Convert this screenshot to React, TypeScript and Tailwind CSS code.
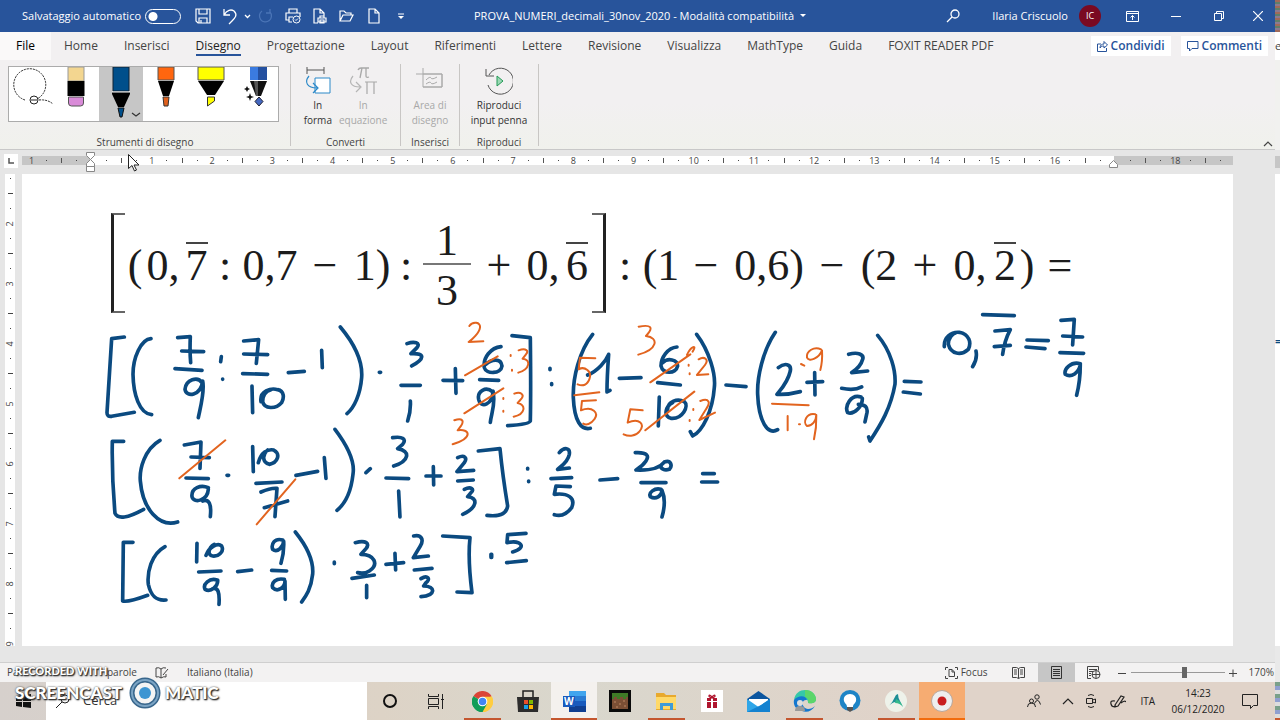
import React from "react";

type Kids = { children: React.ReactNode };

function Svg({ w, h, box, children }: { w: number; h: number; box?: string } & Kids) {
  return (
    <svg width={w} height={h} viewBox={box ?? `0 0 ${w} ${h}`} fill="none" aria-hidden="true" className="shrink-0">
      {children}
    </svg>
  );
}

function QuickButton({ label, children }: { label: string } & Kids) {
  return (
    <button aria-label={label} className="flex h-8 w-[27px] items-center justify-center">
      {children}
    </button>
  );
}

function TitleBar() {
  return (
    <header className="flex h-8 items-center justify-between bg-[#28549b] text-xs text-white">
      <div className="flex items-center">
        <label htmlFor="autosave" className="w-[123px] pl-[22px] text-[11px] whitespace-nowrap">
          Salvataggio automatico
        </label>
        <input
          id="autosave"
          type="checkbox"
          role="switch"
          className="ml-[22px] h-[15px] w-9 appearance-none rounded-full border border-white bg-[radial-gradient(circle_at_7px_50%,#fff_4px,transparent_5px)]"
        />
        <div className="ml-2 flex items-center">
          <QuickButton label="Salva">
            <Svg w={16} h={16}>
              <path d="M1 1h14v14H3L1 13zM4 1v5h8V1M4 15v-5h8v5M6 12v3" stroke="#fff" strokeWidth="1.2" />
            </Svg>
          </QuickButton>
          <QuickButton label="Annulla">
            <Svg w={16} h={17}>
              <path d="M2 1v6h6M2 7C5 2 9 1 12 3c4 4 1 7-2 10l-3 3" stroke="#fff" strokeWidth="1.3" />
            </Svg>
          </QuickButton>
          <button aria-label="Opzioni annulla" className="flex w-[9px] justify-center">
            <Svg w={7} h={5}>
              <path d="M1 1l2.500 2.500L6 1" stroke="#fff" strokeWidth="1.3" />
            </Svg>
          </button>
          <QuickButton label="Ripeti">
            <Svg w={16} h={16}>
              <path d="M12 1v4H8M12 4a6 6 0 1 1-8-1" stroke="#4a74b6" strokeWidth="1.3" />
            </Svg>
          </QuickButton>
          <QuickButton label="Stampa rapida">
            <Svg w={16} h={16}>
              <path d="M4 5V1h8v4M4 12H1V5h14v4M4 12V9h4M4 9v5h3" stroke="#fff" strokeWidth="1.2" />
              <circle cx="11.500" cy="11.500" r="3.500" stroke="#fff" />
              <path d="M10 11.500l1 1 2-2" stroke="#fff" />
            </Svg>
          </QuickButton>
          <QuickButton label="Anteprima di stampa">
            <Svg w={14} h={16}>
              <path d="M5 15H1V1h6l4 4v3M7 1v4h4M7 10V8h4v2M5 10h8v4H5zM7 12h4v3H7z" stroke="#fff" strokeWidth="1.2" />
            </Svg>
          </QuickButton>
          <QuickButton label="Apri">
            <Svg w={15} h={12}>
              <path d="M1 11V1h4l2 2h5v2M1 11l3-6h10l-3 6z" stroke="#fff" strokeWidth="1.2" />
            </Svg>
          </QuickButton>
          <QuickButton label="Nuovo">
            <Svg w={12} h={16}>
              <path d="M1 1h6l4 4v10H1zM7 1v4h4" stroke="#fff" strokeWidth="1.200" />
            </Svg>
          </QuickButton>
          <QuickButton label="Personalizza barra di accesso rapido">
            <Svg w={8} h={7}>
              <path d="M1 1h6" stroke="#fff" />
              <path d="M1 3h6L4 6z" fill="#fff" />
            </Svg>
          </QuickButton>
        </div>
      </div>
      <button className="ml-[60px] flex flex-1 items-center gap-1 text-[11px] whitespace-pre">
        PROVA_NUMERI_decimali_30nov_2020 - Modalità compatibilità
        <Svg w={8} h={4}>
          <path d="M2 0h6L5 3z" fill="#fff" />
        </Svg>
      </button>
      <div className="flex items-center">
        <button aria-label="Cerca" className="mr-8">
          <Svg w={14} h={14}>
            <circle cx="9" cy="5" r="4" stroke="#fff" strokeWidth="1.3" />
            <path d="M6 8L1 13" stroke="#fff" strokeWidth="1.3" />
          </Svg>
        </button>
        <button className="flex items-center gap-[11px] text-[11px]">
          Ilaria Criscuolo
          <span className="flex size-[22px] items-center justify-center rounded-full bg-[#7a0a22] text-[9px]">IC</span>
        </button>
        <button aria-label="Opzioni barra multifunzione" className="ml-[10px] flex w-[43px] justify-center">
          <Svg w={13} h={11}>
            <path d="M.5.500h12v10H.5zM.5 2.500h12M6.500 9V4.500M4.500 6.500l2-2 2 2" stroke="#fff" />
          </Svg>
        </button>
        <button aria-label="Riduci a icona" className="flex w-[43px] justify-center">
          <Svg w={10} h={10}>
            <path d="M0 5.500h10" stroke="#fff" />
          </Svg>
        </button>
        <button aria-label="Ripristina" className="flex w-[43px] justify-center">
          <Svg w={10} h={10}>
            <path d="M.5 2.500h7v7h-7zM2.500 2V.500h7v7H8" stroke="#fff" />
          </Svg>
        </button>
        <button aria-label="Chiudi" className="mr-[-1px] flex w-9 justify-center">
          <Svg w={10} h={10}>
            <path d="M0 0l10 10M10 0L0 10" stroke="#fff" strokeWidth="1.2" />
          </Svg>
        </button>
      </div>
    </header>
  );
}

const tabs = ["Home", "Inserisci", "Disegno", "Progettazione", "Layout", "Riferimenti", "Lettere", "Revisione", "Visualizza", "MathType", "Guida", "FOXIT READER PDF"];

function TabRow() {
  return (
    <nav className="flex h-7 items-center justify-between text-xs text-[#444]">
      <div className="flex h-7 items-center">
        <button className="h-7 w-[51px] bg-[#faf9f9] text-black">File</button>
        {tabs.map((t) => (
          <button key={t} className="flex h-7 items-center px-[13px] text-xs whitespace-nowrap">
            {t === "Disegno" ? (
              <span className="border-y-2 border-t-transparent border-b-[#28549b] font-medium text-[#222]">{t}</span>
            ) : (
              t
            )}
          </button>
        ))}
      </div>
      <div className="mr-[7px] flex gap-[10px] font-semibold text-[#28549b]">
        <button className="flex h-5 items-center gap-[3px] bg-white px-[6px] text-xs">
          <Svg w={11} h={12}>
            <path d="M4 4H.5v7.500h9V8M3 8c0-3 2-4 4-4V1.500L10.500 5 7 8V6C5 6 4 6.500 3 8z" stroke="#28549b" />
          </Svg>
          Condividi
        </button>
        <button className="flex h-5 items-center gap-[3px] bg-white px-[6px] text-xs">
          <Svg w={12} h={11}>
            <path d="M.5.500h10.500v7H5l-2.500 2.500V7.500h-2z" stroke="#28549b" />
          </Svg>
          Commenti
        </button>
      </div>
    </nav>
  );
}

function ToolCell({ label, selected, children }: { label: string; selected?: boolean } & Kids) {
  return (
    <button aria-label={label} className={selected ? "flex flex-1 justify-center bg-[#c6c6c6]" : "flex flex-1 justify-center"}>
      {children}
    </button>
  );
}

function PenGallery() {
  return (
    <div className="mr-[11px] ml-2 flex h-14 w-[271px] border border-[#ababab] bg-white">
      <ToolCell label="Selezione lazo">
        <Svg w={44} h={54}>
          <path d="M16 33a16 16 0 1 1 12-1M30 33q10-1 16 6" stroke="#222" strokeDasharray="2 1" />
          <circle cx="25" cy="33" r="4" stroke="#222" />
          <path d="M22 33h6" stroke="#222" />
        </Svg>
      </ToolCell>
      <ToolCell label="Gomma">
        <Svg w={18} h={42}>
          <path d="M1 0h16v14H1z" fill="#f3d690" stroke="#999" />
          <path d="M.5 14h17v15H.5z" fill="#000" />
          <path d="M1.500 30h15v6q0 3-3 3h-9q-3 0-3-3z" fill="#d98bd8" stroke="#555" />
        </Svg>
      </ToolCell>
      <ToolCell label="Penna blu" selected>
        <Svg w={44} h={54}>
          <path d="M14 0h16v24H14z" fill="#004f8b" stroke="#123" />
          <path d="M13 25h18v2l-6 13h-6L13 27z" fill="#000" />
          <path d="M13 25h18" stroke="#fff" />
          <path d="M19 41h6l-2 9h-2z" fill="#004f8b" stroke="#111" />
          <path d="M33 46l4 3 4-3" stroke="#333" strokeWidth="1.2" />
        </Svg>
      </ToolCell>
      <ToolCell label="Penna arancione">
        <Svg w={18} h={42}>
          <path d="M1 0h16v13H1z" fill="#ff660f" stroke="#555" />
          <path d="M1 14h16l-5 15H6z" fill="#000" />
          <path d="M6 30h6l-1 9H7z" fill="#e0601c" stroke="#333" />
        </Svg>
      </ToolCell>
      <ToolCell label="Evidenziatore giallo">
        <Svg w={28} h={42}>
          <path d="M1 0h26v13H1z" fill="#ff0" stroke="#555" />
          <path d="M1 14h26l-9 14h-8z" fill="#000" />
          <path d="M10.500 30h7v4l-7 5z" fill="#ff0" stroke="#333" />
        </Svg>
      </ToolCell>
      <ToolCell label="Penna galassia">
        <Svg w={34} h={42}>
          <path d="M11 0h8v13h-8z" fill="#3b7be0" />
          <path d="M19 0h9v13h-9z" fill="#2450a0" />
          <path d="M11 14h17l-6 15h-5z" fill="#111" />
          <path d="M15 14h4v15h-2z" fill="#555" />
          <path d="M20 30l4 4.500-4 4.500-4-4.500z" fill="#4468c0" stroke="#223" />
          <path d="M8 19l1 2 2 1-2 1-1 2-1-2-2-1 2-1zM11 26l1 3 3 1-3 1-1 3-1-3-3-1 3-1z" fill="#111" />
        </Svg>
      </ToolCell>
    </div>
  );
}

function Group({ name, width, children }: { name: string; width: string } & Kids) {
  return (
    <section className={`${width} flex h-[82px] flex-col items-center justify-between border-r border-[#c8c6c4]`}>
      {children}
      <h2 className="text-[10px] leading-2 whitespace-nowrap text-[#444]">{name}</h2>
    </section>
  );
}

function BigButton({ top, bottom, disabled, children }: { top: string; bottom: string; disabled?: boolean } & Kids) {
  return (
    <button
      disabled={disabled}
      className="flex h-16 flex-col items-center text-[10px] leading-[15px] whitespace-nowrap text-[#333] disabled:text-[#a8a8a8]"
    >
      <span className="flex h-[34px] items-center justify-center">{children}</span>
      <span>{top}</span>
      <span>{bottom}</span>
    </button>
  );
}

function Ribbon() {
  return (
    <div className="flex h-[90px] items-start border-b border-[#c8c8c8] pt-1">
      <Group name="Strumenti di disegno" width="w-[291px] pt-[2px]">
        <PenGallery />
      </Group>
      <Group name="Converti" width="w-[110px]">
        <div className="flex gap-[7px]">
          <BigButton top="In" bottom="forma">
            <Svg w={28} h={28}>
              <path d="M3 3h17M3 0v7M20 0v7" stroke="#555" />
              <path d="M11 11h15v15H11z" fill="#fff" stroke="#2b88c8" />
              <path d="M5 9c-5 6-2 12 8 12M9 16l5 5-5 5" stroke="#2b88c8" strokeWidth="1.2" />
            </Svg>
          </BigButton>
          <BigButton top="In" bottom="equazione" disabled>
            <Svg w={28} h={28}>
              <path d="M9 3q1-2 3-2h8M13 1l-2 10M17 1v8q0 2 3 1" stroke="#a8a8a8" strokeWidth="1.3" />
              <path d="M16 15h12M18 15v12M25 15v12" stroke="#a8a8a8" strokeWidth="1.2" />
              <path d="M4 9c-5 6-2 11 7 11M7 15l5 5-5 5" stroke="#b5b5b5" strokeWidth="1.2" />
            </Svg>
          </BigButton>
        </div>
      </Group>
      <Group name="Inserisci" width="w-[59px]">
        <BigButton top="Area di" bottom="disegno" disabled>
          <Svg w={28} h={26}>
            <path d="M7 0v19h19V6H0M7 6h19v13H7M10 12q4-4 5-2t6-1M10 16q4-3 5-1t6-1" stroke="#aaa" />
          </Svg>
        </BigButton>
      </Group>
      <Group name="Riproduci" width="w-[79px]">
        <BigButton top="Riproduci" bottom="input penna">
          <Svg w={28} h={28}>
            <path d="M3 18A13 13 0 1 0 4 8M1 2v7h8" stroke="#555" />
            <path d="M12 9v10l6-5z" fill="#9bd8b4" stroke="#249957" />
          </Svg>
        </BigButton>
      </Group>
      <button aria-label="Comprimi barra multifunzione" className="mr-[2px] ml-auto self-end pb-[2px]">
        <Svg w={10} h={6}>
          <path d="M1 5l4-4 4 4" stroke="#444" strokeWidth="1.2" />
        </Svg>
      </button>
    </div>
  );
}

const horizontalNumbers = ["1", "", ...Array.from({ length: 16 }, (_, i) => String(i + 1)), "", "18"];

function HorizontalRuler() {
  return (
    <div className="flex h-[24px] items-start bg-[#e6e6e6]">
      <button aria-label="Tabulazione" className="mt-1 mr-[4px] ml-1 flex size-[14px] items-center justify-center bg-white">
        <Svg w={6} h={6}>
          <path d="M1 0v5h5" stroke="#555" strokeWidth="1.500" />
        </Svg>
      </button>
      <div className="relative mt-[6px] grid h-[9px] w-[1211px] grid-cols-20 bg-[linear-gradient(to_right,#c6c6c6_69px,#fff_69px,#fff_1092px,#c6c6c6_1092px)] pr-[5px] pl-[2px] text-[9px] leading-[9px] text-[#444]">
        {horizontalNumbers.map((n, i) => (
          <div key={i} className="grid grid-cols-4 items-center justify-items-center">
            <span>{n}</span>
            <span className="size-px bg-[#444]" />
            <span className="h-[5px] w-px bg-[#555]" />
            <span className="size-px bg-[#444]" />
          </div>
        ))}
        <svg className="absolute -top-1 left-[64px]" width="10" height="22" viewBox="0 0 10 22" aria-hidden="true">
          <path d="M.5.500h8v3l-4 4-4-4zM.5 14.500v-3l4-4 4 4v3zM.5 14.500h8v5h-8z" fill="#fff" stroke="#888" />
        </svg>
        <svg className="absolute top-[4px] left-[1087px]" width="10" height="9" viewBox="0 0 10 9" aria-hidden="true">
          <path d="M.5 7.500v-3l4-4 4 4v3z" fill="#fff" stroke="#888" />
        </svg>
        <svg className="absolute -top-[2px] left-[106px]" width="13" height="18" viewBox="0 0 13 18" aria-label="Puntatore">
          <path d="M.5.500v14l3.500-3 2.500 5.500 2-1L6 11h5z" fill="#fff" stroke="#222" />
        </svg>
      </div>
    </div>
  );
}

function VerticalRuler() {
  const numbers = ["2", "3", "4", "5", "6", "7", "8", "9"];
  return (
    <div className="mr-[7px] ml-[5px] flex h-[472px] w-[10px] shrink-0 flex-col overflow-hidden bg-white text-[9px] text-[#444]">
      <div className="-mt-[3px] grid h-[45px] shrink-0 grid-rows-3 place-items-center">
        <span className="size-px bg-[#444]" />
        <span className="h-px w-[5px] bg-[#444]" />
        <span className="size-px bg-[#444]" />
      </div>
      {numbers.map((n) => (
        <div key={n} className="grid h-[60px] shrink-0 grid-rows-4 place-items-center">
          <span className="-rotate-90 leading-[10px]">{n}</span>
          <span className="size-px bg-[#444]" />
          <span className="h-px w-[5px] bg-[#444]" />
          <span className="size-px bg-[#444]" />
        </div>
      ))}
    </div>
  );
}

const leftTerms = [
  { t: "(", w: "w-4" },
  { t: "0,", w: "w-10" },
  { t: "7", w: "w-[27px]", bar: true },
  { t: ":", w: "w-[30px]" },
  { t: "0,7", w: "w-[60px]" },
  { t: "−", w: "w-[50px]" },
  { t: "1)", w: "w-11" },
  { t: ":", w: "w-6" },
];
const midTerms = [
  { t: "+", w: "w-[46px]" },
  { t: "0,", w: "w-[42px]" },
  { t: "6", w: "w-[26px]", bar: true },
];
const rightTerms = [
  { t: ":", w: "w-[30px]" },
  { t: "(1", w: "w-[42px]" },
  { t: "−", w: "w-12" },
  { t: "0,6)", w: "w-[78px]" },
  { t: "−", w: "w-12" },
  { t: "(2", w: "w-[46px]" },
  { t: "+", w: "w-[46px]" },
  { t: "0,", w: "w-11" },
  { t: "2", w: "w-[26px]", bar: true },
  { t: ")", w: "w-[18px]" },
  { t: "=", w: "w-12" },
];

function Terms({ items }: { items: { t: string; w: string; bar?: boolean }[] }) {
  return (
    <>
      {items.map((x, i) => (
        <span key={i} className={`${x.w} flex shrink-0 justify-center`}>
          <span className={x.bar ? "border-y-2 border-t-[#444] border-b-transparent" : ""}>{x.t}</span>
        </span>
      ))}
    </>
  );
}

function Formula() {
  return (
    <div className="flex h-[106px] items-center pl-[89px] font-['Liberation_Serif',serif] text-[44px] leading-[44px] whitespace-nowrap text-[#1c1c1c]">
      <span className="mr-[2px] h-[100px] w-[14px] shrink-0 self-start border-y-2 border-l-[3px] border-y-[#666] border-l-[#222]" />
      <Terms items={leftTerms} />
      <span className="mx-[5px] flex w-12 shrink-0 flex-col items-center">
        <span>1</span>
        <span className="mb-1 h-[2px] w-12 bg-[#777]" />
        <span>3</span>
      </span>
      <Terms items={midTerms} />
      <span className="mr-1 ml-[2px] h-[100px] w-[14px] shrink-0 self-start border-y-2 border-r-[3px] border-y-[#666] border-r-[#222]" />
      <Terms items={rightTerms} />
    </div>
  );
}

const BLUE = "#0b4a80";
const ORANGE = "#e2641f";

const ink = [
  {
    x: 90,
    y: 190,
    blue:
      "M100 438L62 443Q55 560 48 665Q48 678 62 676L130 664 M180 443C150 445 126 500 126 550C127 610 145 668 182 671 M260 440L298 437Q296 480 299 515M272 480L338 482 M252 533L333 538 M333 575C320 555 285 565 282 595C285 620 330 615 335 570C342 600 328 650 322 680 M391 497L389 512M395 564v1 M458 450L503 446L496 517M458 489L530 491 M455 548L530 550 M483 585L485 665 M510 632C505 600 540 590 560 596C580 600 580 620 572 635C555 655 520 655 515 632C515 610 525 600 540 596 M592 545L640 541 M692 478L694 530 M748 408C800 470 815 520 812 560C808 610 790 650 768 668 M865 544h4",
    orange: "",
  },
  {
    x: 400,
    y: 190,
    blue:
      "M18 458C40 450 60 455 48 470L30 488C75 485 70 505 32 525 M0 583L58 583 M28 630Q30 660 20 690 M126 568L185 569M163 533L165 607 M300 467C270 470 245 500 250 530C255 550 300 550 303 525C300 500 270 505 255 520 M236 566L293 568 M275 603C255 585 228 600 233 625C240 655 275 640 276 600C285 640 270 670 268 694 M333 434L388 440Q390 600 388 690Q385 700 320 704 M447 532v4M452 578v3 M575 430C535 480 515 560 517 620C520 690 540 718 568 712 M560 552C590 540 615 510 623 490Q618 560 618 603L627 598 M655 562L720 560 M828 468C800 470 780 500 780 525C785 550 825 550 830 525C830 505 800 500 785 515 M770 575L838 582 M775 618L772 705 M800 655C800 630 830 622 850 632C865 645 845 685 810 682C785 675 795 645 815 635 M887 430C925 480 945 550 940 590C935 660 905 720 875 735L868 722",
    orange:
      "M205 405C215 390 240 393 237 410C235 425 215 445 203 453L247 451 M192 553L290 496 M190 667L307 592 M329 492v3M333 536v3 M353 478C375 470 385 480 375 490L365 503C390 505 388 535 352 545 M307 621v3M307 659v3 M340 608C360 600 370 612 362 622L350 636C375 640 375 670 338 677 M160 688C185 680 190 690 180 705L170 718C205 712 220 740 155 760 M583 502L537 500L533 535C550 525 575 540 565 565Q555 590 530 580 M520 613L595 604 M585 628L543 630L540 658C575 645 595 665 580 685C570 700 555 703 547 698 M713 407C750 400 760 408 735 435C775 440 770 475 712 491 M748 574L868 490M858 492C870 465 890 460 875 482 M863 521v3M866 547v3 M893 505C910 495 925 505 912 522L888 552L922 550 M733 718L880 602 M725 658L688 655L680 695C715 680 735 700 715 722C705 735 685 738 668 730 M877 654v3M866 687v3 M898 630C925 620 930 635 915 655L895 687L942 665",
  },
  {
    x: 720,
    y: 190,
    blue:
      "M15 582L75 587 M163 424C125 480 108 560 110 610C113 690 140 735 170 716 M172 530C190 515 212 518 208 540C200 575 180 595 168 610Q200 612 238 602 M258 574L305 572M281 545L282 612 M383 490C410 482 430 490 425 505C420 525 400 540 392 545L440 540 M362 592Q400 600 422 588 M420 618C390 608 370 645 380 665C400 672 425 645 424 622 M412 640Q442 640 438 665L432 693 M470 433C510 480 525 540 522 580C510 650 480 700 447 750L443 738 M550 571L600 573M547 603L598 609 M670 467C668 440 690 422 715 424C745 430 752 455 742 475C720 495 690 490 682 460C682 440 695 428 705 425 M765 480Q770 505 755 527 M785 371L880 374 M822 420L868 416Q850 450 845 490M820 467L868 463 M918 447L982 449M915 468L972 473 M1020 388L1060 385L1055 462M1025 435L1085 438 M1017 485L1088 487 M1078 518C1050 510 1028 535 1033 550C1050 562 1075 545 1078 520Q1078 570 1067 613",
    orange:
      "M240 519l10 5 M300 475C280 465 255 480 258 500C265 515 295 500 303 478Q305 510 298 537 M153 638L263 643 M200 675L200 718 M234 700h3 M283 670C255 665 245 695 258 705C275 705 285 690 286 672Q287 710 279 745",
  },
  {
    x: 90,
    y: 425,
    blue:
      "M98 46L64 46Q62 150 72 262Q85 290 158 250 M207 43C160 70 145 130 148 165C155 250 205 305 260 288 M280 57L330 48L327 127M300 93L355 95 M285 156L352 158 M352 185C330 175 300 185 303 212C310 235 350 222 352 190M335 225Q364 215 358 272 M408 148h5 M485 62L487 137 M502 110C510 80 530 68 548 72C570 85 560 110 535 115C515 110 512 88 530 72 M495 172L573 168 M510 198Q540 185 558 187L552 272M520 245L590 225 M615 148L680 136 M700 95L705 157 M732 10C770 60 792 110 786 145C780 200 760 235 738 253 M825 140L838 128 M905 35C935 30 948 40 935 55L920 68C960 75 955 105 908 120 M885 156L953 158 M923 195L927 273 M126 349L97 349L95 525Q110 530 170 508 M222 362C180 385 168 440 172 475C180 510 195 525 225 522 M318 352L317 408 M345 388C355 362 380 350 392 360C400 375 385 392 365 390C348 388 352 365 370 355 M323 438L390 435 M378 462C355 455 335 475 342 490C360 500 382 480 380 462M365 488Q388 480 384 535 M440 437L482 432 M575 342C550 335 540 355 545 370C560 382 578 360 578 345Q580 380 570 412 M542 433L587 435 M580 460C555 455 540 470 545 485C560 500 582 485 582 465L583 520 M613 318C655 370 668 410 665 445C660 490 645 510 632 528 M730 408v5 M793 350C825 342 838 352 825 368L810 385C850 385 865 415 835 435Q820 445 800 440 M783 457L850 447 M827 478L827 515 M885 415L938 410M912 382L914 432",
    orange: "M265 157L403 43 M497 295L613 160",
  },
  {
    x: 400,
    y: 425,
    blue:
      "M75 150L120 150M97 122L98 177 M170 95C190 85 200 95 190 110L168 137L218 133 M170 165L217 162 M190 190C210 180 222 190 210 200L200 212C232 215 230 245 185 265 M232 75L297 68Q305 150 320 240Q315 275 258 268 M380 127v2M383 165v2 M475 80C490 62 508 65 505 85C500 110 480 120 470 130L505 126 M450 158L512 155 M508 182L465 180L460 205C500 200 525 215 512 245Q490 275 460 266 M597 162L650 158 M703 80C740 78 745 90 735 105Q725 120 705 132Q770 135 790 108C810 100 815 120 805 130C790 135 778 128 780 118 M720 170L795 170 M780 190C760 185 742 200 748 212C765 222 782 210 783 193Q797 225 783 273 M905 143L940 143M902 168L950 168 M38 330C60 325 70 340 58 360L37 395L82 390 M40 432L93 427 M60 458C80 445 90 460 75 470L68 480C105 480 105 510 60 512 M125 330L207 335Q200 400 213 500L168 498 M270 385v9M272 385v9 M375 322L320 326L318 350C360 340 380 365 335 378 M317 410L376 404",
    orange: "",
  },
];

function InkLayer() {
  return (
    <svg
      className="absolute top-0 left-0"
      width="1211"
      height="472"
      viewBox="21 173 1211 472"
      fill="none"
      strokeLinecap="round"
      strokeLinejoin="round"
      role="img"
      aria-label="Svolgimento a penna dell'espressione"
    >
      {ink.map((s, i) => (
        <g key={i} transform={`translate(${s.x} ${s.y}) scale(0.3333)`}>
          <path d={s.blue} stroke={BLUE} strokeWidth="11" />
        </g>
      ))}
      {ink.map((s, i) => (
        <g key={i} transform={`translate(${s.x} ${s.y}) scale(0.3333)`}>
          <path d={s.orange} stroke={ORANGE} strokeWidth="6" />
        </g>
      ))}
    </svg>
  );
}

function StatusBar() {
  return (
    <footer className="flex h-5 items-center justify-between border-t border-[#cfcfcf] bg-[#f3f2f2] text-[10px] text-[#444]">
      <div className="flex items-center pl-[7px]">
        <span className="w-[100px]">Pa</span>
        <span>parole</span>
        <button aria-label="Controllo ortografia" className="mx-[18px]">
          <Svg w={14} h={12}>
            <path d="M6 2Q4 0 1 1v9q3-1 5 1zM6 2q2-2 5-1M6 11q3-2 5-1V7M8 8l5-6" stroke="#444" />
          </Svg>
        </button>
        <span>Italiano (Italia)</span>
      </div>
      <div className="flex items-center">
        <button className="mr-6 flex items-center gap-[3px]">
          <Svg w={13} h={12}>
            <path d="M3 .5H.5V3M.5 9v2.500H3M10 .5h2.500V3M12.500 9v2.500H10M4 2.500h3l2.500 2.500v4.500H4zM7 2.500V5h2" stroke="#444" />
          </Svg>
          Focus
        </button>
        <button aria-label="Modalità lettura" className="mr-[13px]">
          <Svg w={13} h={12}>
            <path d="M6.500 1.500v10M.5.500h4l2 1 2-1h4v10h-4l-2 1-2-1h-4zM2 3h3M2 5h3M2 7h3M8 3h3M8 5h3M8 7h3" stroke="#444" />
          </Svg>
        </button>
        <button aria-label="Layout di stampa" className="flex h-[19px] w-[37px] items-center justify-center bg-[#c6c6c6]">
          <Svg w={11} h={13}>
            <path d="M.5.500h10v12H.5zM2 3.500h7M2 5.500h7M2 7.500h7M2 9.500h7" stroke="#333" />
          </Svg>
        </button>
        <button aria-label="Layout Web" className="mx-[12px]">
          <Svg w={14} h={13}>
            <path d="M4 12.500H.5V.500h11v4M2 3.500h8M2 5.500h4M2 7.500h2M2 9.500h2" stroke="#444" />
            <circle cx="9" cy="8.500" r="4" stroke="#444" />
            <path d="M5 8.500h8M9 4.500v8" stroke="#444" />
          </Svg>
        </button>
        <button aria-label="Zoom indietro" className="mx-[5px]">
          <Svg w={8} h={8}>
            <path d="M0 4.500h8" stroke="#444" />
          </Svg>
        </button>
        <input
          type="range"
          aria-label="Zoom"
          defaultValue={58}
          className="h-3 w-[94px] appearance-none bg-[linear-gradient(#999,#999)] bg-[length:100%_1px] bg-center bg-no-repeat [&::-webkit-slider-thumb]:h-[11px] [&::-webkit-slider-thumb]:w-[5px] [&::-webkit-slider-thumb]:appearance-none [&::-webkit-slider-thumb]:bg-[#666]"
        />
        <button aria-label="Zoom avanti" className="mr-3 ml-1">
          <Svg w={8} h={8}>
            <path d="M0 4.500h8M4 .500v8" stroke="#444" />
          </Svg>
        </button>
        <span className="pr-px">170%</span>
      </div>
    </footer>
  );
}

function TaskButton({ label, tone, children }: { label: string; tone?: "running" | "active" | "recording" } & Kids) {
  const base = "flex h-[38px] w-[46px] items-center justify-center px-1";
  if (tone === "active")
    return (
      <button aria-label={label} className={`${base} border-y-2 border-t-[#f4f1ee] border-b-[#c4562f] bg-[#f4f1ee]`}>
        {children}
      </button>
    );
  if (tone === "recording")
    return (
      <button aria-label={label} className={`${base} border-y-2 border-t-[#f6ac72] border-b-[#f26c0d] bg-[#f6ac72]`}>
        {children}
      </button>
    );
  return (
    <button aria-label={label} className="flex w-[46px] justify-center">
      <span
        className={
          tone === "running"
            ? "flex h-[38px] w-[37px] items-center justify-center border-y-2 border-t-transparent border-b-[#c4562f]"
            : "flex h-[38px] w-[37px] items-center justify-center"
        }
      >
        {children}
      </span>
    </button>
  );
}

function TaskIcons() {
  return (
    <div className="flex">
      <TaskButton label="Cortana">
        <Svg w={16} h={16}>
          <circle cx="8" cy="8" r="6" stroke="#111" strokeWidth="2" />
        </Svg>
      </TaskButton>
      <TaskButton label="Visualizzazione attività">
        <Svg w={16} h={15}>
          <path d="M.5 0v2.500h10V0M.5 15v-2.500h10V15M.5 4.500h10v6H.5zM14.500 0v15M13 5.500h3" stroke="#222" />
        </Svg>
      </TaskButton>
      <TaskButton label="Google Chrome" tone="running">
        <Svg w={21} h={21} box="0 0 24 24">
          <path d="M12 12L1.600 6A12 12 0 0 1 22.400 6z" fill="#db4437" />
          <path d="M12 12L22.400 6A12 12 0 0 1 12 24z" fill="#ffcd40" />
          <path d="M12 12v12A12 12 0 0 1 1.600 6z" fill="#0f9d58" />
          <path d="M12 6.500h10.700A12 12 0 0 1 12 24l5-9z" fill="#ffcd40" />
          <path d="M7 15L1.600 6A12 12 0 0 0 12 24l5-9z" fill="#0f9d58" />
          <circle cx="12" cy="12" r="5.500" fill="#fff" />
          <circle cx="12" cy="12" r="4.300" fill="#4285f4" />
        </Svg>
      </TaskButton>
      <TaskButton label="Microsoft Store">
        <Svg w={22} h={23}>
          <path d="M6 7V1h10v6" stroke="#222" strokeWidth="1.500" />
          <path d="M0 7h22l-1 15H1z" fill="#2c2c2c" />
          <path d="M7 10h4v4H7z" fill="#e8502c" />
          <path d="M12 10h4v4h-4z" fill="#7fba00" />
          <path d="M7 15h4v4H7z" fill="#17a0e8" />
          <path d="M12 15h4v4h-4z" fill="#ffb900" />
        </Svg>
      </TaskButton>
      <TaskButton label="Word" tone="active">
        <svg width="23" height="21" viewBox="0 0 23 21" aria-hidden="true">
          <path d="M6 0h17v6H6z" fill="#41a5ee" />
          <path d="M6 5h17v6H6z" fill="#2b7cd3" />
          <path d="M6 10h17v6H6z" fill="#185abd" />
          <path d="M6 15h17v6H6z" fill="#103f91" />
          <path d="M0 5h12v11H0z" fill="#185abd" />
          <text x="1" y="14" fontSize="10" fontWeight="700" fill="#fff">W</text>
        </svg>
      </TaskButton>
      <TaskButton label="Minecraft">
        <Svg w={22} h={22}>
          <path d="M0 0h22v22H0z" fill="#0a0a0a" />
          <path d="M3 3h16v16H3z" fill="#7b4f35" />
          <path d="M3 3h16v4h-2v2h-3V7h-3v2H8V7H5v2H3z" fill="#3f7a26" />
          <path d="M5 11h2v2H5zM10 13h2v2h-2zM14 10h2v2h-2zM7 16h2v2H7zM15 15h2v2h-2z" fill="#9c6b4c" />
        </Svg>
      </TaskButton>
      <TaskButton label="Esplora file" tone="running">
        <Svg w={21} h={19}>
          <path d="M0 1h8l2 2h10v15H0z" fill="#e8a92e" />
          <path d="M0 5h20v12H0z" fill="#ffd968" />
          <path d="M4 18v-7h13v7h-3v-4H7v4z" fill="#3f9bd8" />
        </Svg>
      </TaskButton>
      <TaskButton label="Regali">
        <Svg w={22} h={22}>
          <path d="M0 0h22v22H0z" fill="#fff" />
          <path d="M6 8h4v3H6zM12 8h4v3h-4zM6 12h4v6H6zM12 12h4v6h-4z" fill="#b0152e" />
          <path d="M11 8C6 7 8 3 11 7c3-4 5 0 0 1z" stroke="#b0152e" strokeWidth="1.300" />
        </Svg>
      </TaskButton>
      <TaskButton label="Posta">
        <Svg w={23} h={21}>
          <path d="M0 8l11.500-8L23 8v4H0z" fill="#0b559f" />
          <path d="M2 8h19v8H2z" fill="#fff" />
          <path d="M0 8l11.500 8L23 8v13H0z" fill="#2fa6e8" />
          <path d="M0 21L14 14l9-6v13z" fill="#1482d0" />
        </Svg>
      </TaskButton>
      <TaskButton label="Microsoft Edge" tone="running">
        <Svg w={23} h={22}>
          <path d="M1 10C2 3 7 0 12 0c7 0 11 5 11 9 0 4-4 5-8 4 1-5-8-8-14-3z" fill="#35c8a8" />
          <path d="M12 0c7 0 11 5 11 9 0 4-4 5-8 4 1-3 0-5-3-6z" fill="#5cd66a" />
          <path d="M1 10c4-5 12-5 13 0-6-1-6 8 1 9 3 0 5-1 7-3-3 5-8 7-13 5C3 20 0 15 1 10z" fill="#1477cf" />
          <circle cx="7" cy="13" r="3" fill="#ddd" />
          <path d="M2 21q0-5 5-5t5 5z" fill="#999" />
        </Svg>
      </TaskButton>
      <TaskButton label="Suggerimenti">
        <Svg w={22} h={22}>
          <circle cx="11" cy="10.500" r="10.500" fill="#1d84c6" />
          <path d="M11 4c-4 0-7 3-6 7 1 3 3 3 3 6h6c0-3 2-3 3-6 1-4-2-7-6-7z" fill="#fff" />
          <path d="M8 17h6v3l-3 2-3-2z" fill="#555" />
        </Svg>
      </TaskButton>
      <TaskButton label="Apowersoft" tone="running">
        <Svg w={22} h={22}>
          <circle cx="11" cy="11" r="11" fill="#eef2ea" />
          <path d="M3 17q5-5 8-12l2-1q0 4 2 7l3 6q-3-5-7-5t-8 5z" fill="#1b8f96" />
          <path d="M11 9q4 1 7 8-3-4-8-4z" fill="#35b98c" />
        </Svg>
      </TaskButton>
      <TaskButton label="Registratore" tone="recording">
        <Svg w={22} h={22}>
          <circle cx="11" cy="11" r="10.500" fill="#eee" stroke="#b9a79b" />
          <circle cx="11" cy="11" r="4.500" fill="#c81e1e" />
        </Svg>
      </TaskButton>
    </div>
  );
}

function Taskbar() {
  return (
    <div className="flex h-[38px] items-center justify-between bg-[linear-gradient(to_right,#d6d0cc,#ddd3c6_30%,#d9d7cd_45%,#e0d3c9_70%)]">
      <div className="flex items-center">
        <button aria-label="Start" className="flex w-[46px] justify-center">
          <Svg w={15} h={14}>
            <path d="M0 2l6-1v6H0zM7 1l8-1v7H7zM0 8h6v5l-6-1zM7 8h8v6l-8-1z" fill="#111" />
          </Svg>
        </button>
        <label className="flex h-[38px] w-[321px] items-center gap-[13px] bg-white pl-[10px]">
          <Svg w={14} h={14}>
            <circle cx="9" cy="5" r="4" stroke="#222" />
            <path d="M6 8L0 14" stroke="#222" />
          </Svg>
          <input aria-label="Cerca" placeholder="Cerca" className="w-[200px] text-[13px] outline-none placeholder:text-[#333]" />
        </label>
        <TaskIcons />
      </div>
      <div className="flex items-center text-[10px] leading-4 text-[#222]">
        <button aria-label="Contatti" className="mr-[21px]">
          <Svg w={14} h={14}>
            <circle cx="4.500" cy="7" r="2" stroke="#222" />
            <path d="M.5 13q0-4 4-4t4 4M7.500 9.500q1-3 3-3t3 4" stroke="#222" />
            <circle cx="10" cy="3" r="2.200" stroke="#222" />
          </Svg>
        </button>
        <button aria-label="Icone nascoste" className="mr-[11px]">
          <Svg w={12} h={7}>
            <path d="M1 6l5-5 5 5" stroke="#222" strokeWidth="1.200" />
          </Svg>
        </button>
        <button aria-label="Videochiamata" className="mr-[13px]">
          <Svg w={12} h={14}>
            <path d="M1.500 4.500h6v5h-6zM7.500 6l3-1v4l-3-1M3 1.500q3-2 6 0M3 12.500q3 2 6 0" stroke="#222" />
          </Svg>
        </button>
        <button aria-label="Penna" className="mr-[14px]">
          <Svg w={16} h={14}>
            <path d="M5 11l6-9 3 1-6 9-3 1zM5 7Q0 6 1 10t5 2M11 9q4-3 5-1" stroke="#222" strokeWidth="1.200" />
          </Svg>
        </button>
        <button className="mr-[14px]">ITA</button>
        <button className="mr-[15px] w-[58px] text-center text-[10px] leading-4">
          14:23
          <br />
          06/12/2020
        </button>
        <button aria-label="Notifiche" className="mr-[17px]">
          <Svg w={16} h={15}>
            <path d="M.5.500h15v11h-4l-3 3v-3h-8z" stroke="#222" />
          </Svg>
        </button>
      </div>
    </div>
  );
}

function Watermark() {
  return (
    <div className="pointer-events-none absolute bottom-[11px] left-[15px] font-['Lato','Open_Sans',sans-serif] font-black text-white [text-shadow:1px_1px_1px_#333,1px_1px_2px_#333,0_0_2px_#555]">
      <div className="text-[11px] leading-3">RECORDED WITH</div>
      <div className="flex items-center text-[17px] leading-8">
        <span className="w-[114px]">SCREENCAST</span>
        <Svg w={32} h={32}>
          <circle cx="16" cy="16" r="13" fill="#f4f4f4" stroke="#38668c" strokeWidth="5" />
          <circle cx="16" cy="16" r="13" stroke="#7ba4c4" strokeWidth="2" />
          <circle cx="16" cy="16" r="6" fill="#3d95d2" />
        </Svg>
        <span className="ml-1">MATIC</span>
      </div>
    </div>
  );
}

function NextScreenEdge() {
  return (
    <div className="flex w-[5px] shrink-0 flex-col overflow-hidden text-[11px] text-[#444]">
      <div className="h-8 bg-[repeating-linear-gradient(#a06a5a_0_2px,#5f7f6a_2px_4px,#8a7a90_4px_6px)]" />
      <div className="h-7 bg-white leading-7">e</div>
      <div className="h-[90px] bg-[#f1f1ef]" />
      <div className="h-6 border-y-[6px] border-[#e6e6e6] bg-[#c6c6c6]" />
      <div className="flex-1 bg-white pt-[158px] text-xs leading-5 font-bold text-[#0b4a80]">=</div>
      <div className="h-9 bg-[#e9e9e9]" />
      <div className="h-[38px] border-b-2 border-[#c4562f] bg-[repeating-linear-gradient(#7aa08a_0_4px,#8f9fd0_4px_8px,#ddd_8px_12px)]" />
    </div>
  );
}

export default function App() {
  return (
    <div className="flex min-h-screen font-['Open_Sans','Noto_Sans',sans-serif]">
      <div className="relative flex min-w-0 flex-1 flex-col">
        <TitleBar />
        <div className="bg-[linear-gradient(#f2f0f1_60%,#f0f1ec)]">
          <TabRow />
          <Ribbon />
        </div>
        <HorizontalRuler />
        <main className="flex flex-1 items-start overflow-hidden bg-[#e6e6e6] pb-4">
          <VerticalRuler />
          <article className="relative h-[472px] w-[1211px] shrink-0 bg-white pt-[39px]">
            <Formula />
            <InkLayer />
          </article>
        </main>
        <StatusBar />
        <Taskbar />
        <Watermark />
      </div>
      <NextScreenEdge />
    </div>
  );
}
